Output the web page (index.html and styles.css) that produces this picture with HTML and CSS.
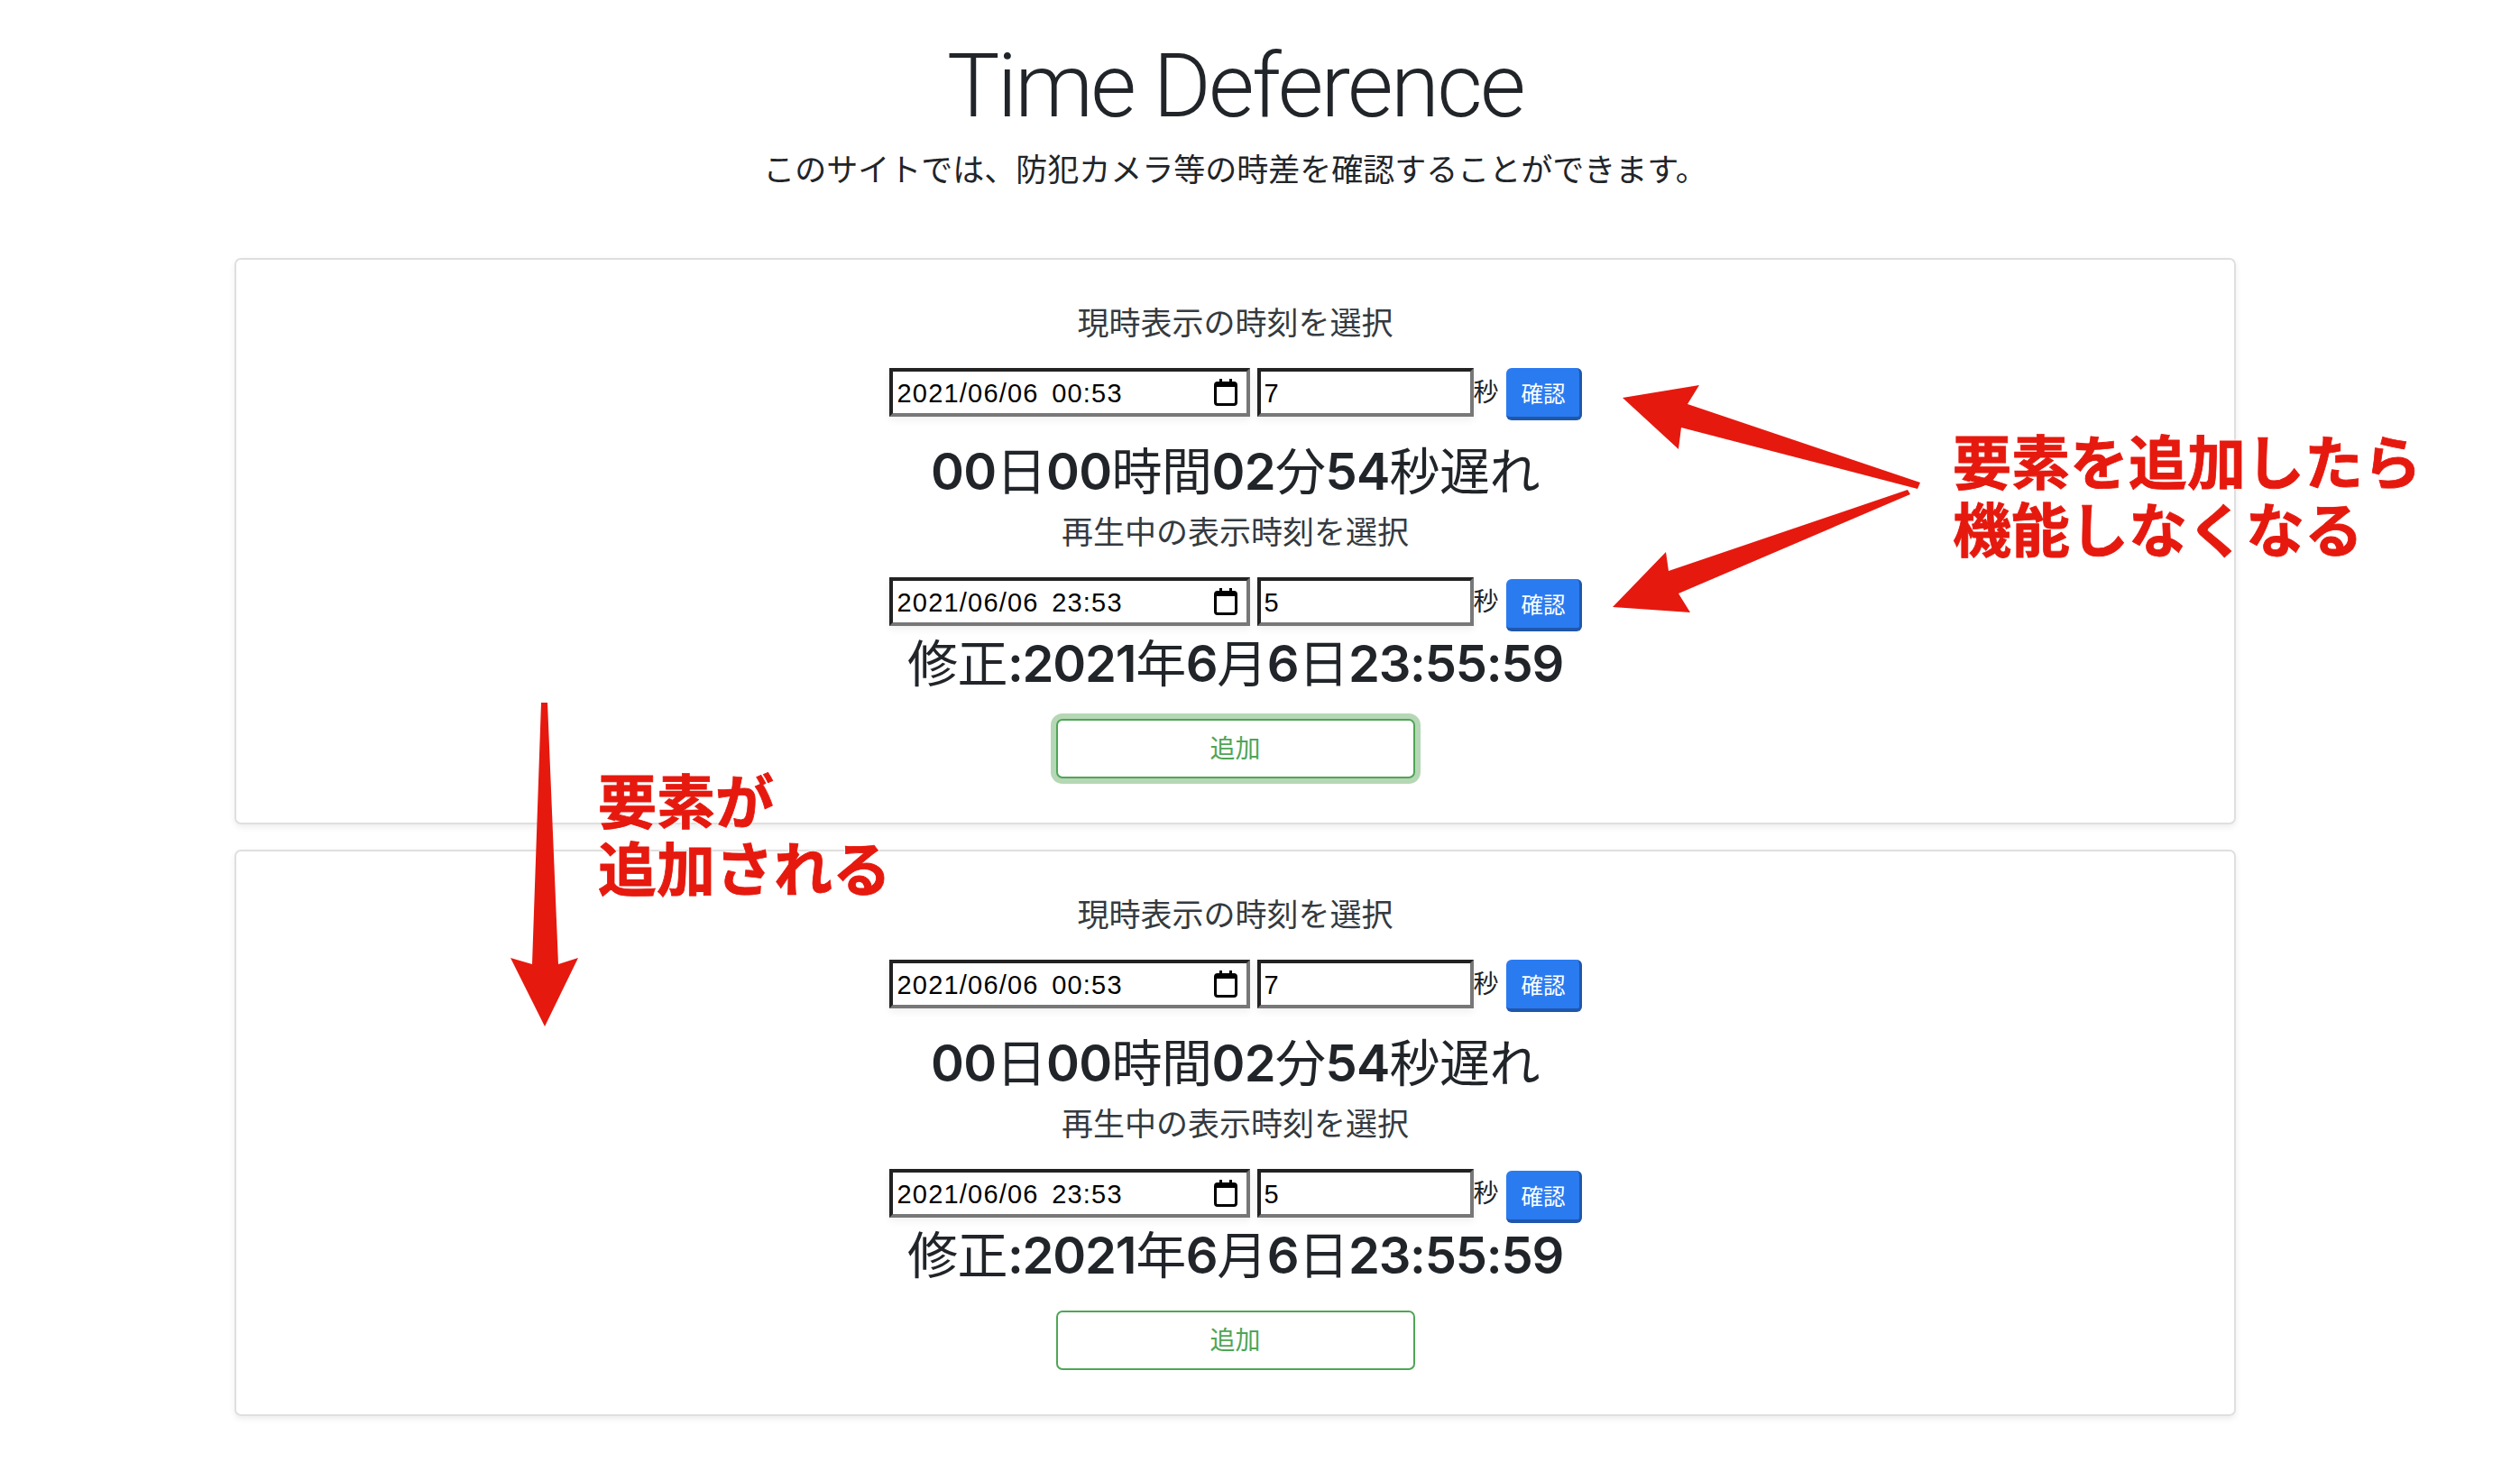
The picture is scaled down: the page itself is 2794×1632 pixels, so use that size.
FILE: index.html
```html
<!DOCTYPE html>
<html lang="ja">
<head>
    <meta charset="UTF-8">
    <meta name="viewport" content="width=device-width, initial-scale=1.0">
    <title>Time Deference</title>
    <link rel="stylesheet" href="styles.css">
</head>
<body>
    <main class="page">
        <header class="header">
            <h1 class="title">Time Deference</h1>
            <p class="lead">このサイトでは、防犯カメラ等の時差を確認することができます。</p>
        </header>

        <section class="card">
            <p class="label">現時表示の時刻を選択</p>
            <div class="row">
                <div class="field field-date">
                    <span class="value">2021/06/06  00:53</span>
                    <svg class="cal" viewBox="0 0 26 30"><path d="M6 0h3v3h8V0h3v3h2a4 4 0 0 1 4 4v19a4 4 0 0 1-4 4H4a4 4 0 0 1-4-4V7a4 4 0 0 1 4-4h2zM3 9v17a1 1 0 0 0 1 1h18a1 1 0 0 0 1-1V9z" fill-rule="evenodd"/></svg>
                </div>
                <div class="field field-num"><span class="value">7</span></div>
                <span class="unit">秒</span>
                <button class="btn-check">確認</button>
            </div>
            <h3 class="result result-delay"><b>00</b>日<b>00</b>時間<b>02</b>分<b>54</b>秒遅れ</h3>
            <p class="label label-second">再生中の表示時刻を選択</p>
            <div class="row row-second">
                <div class="field field-date">
                    <span class="value">2021/06/06  23:53</span>
                    <svg class="cal" viewBox="0 0 26 30"><path d="M6 0h3v3h8V0h3v3h2a4 4 0 0 1 4 4v19a4 4 0 0 1-4 4H4a4 4 0 0 1-4-4V7a4 4 0 0 1 4-4h2zM3 9v17a1 1 0 0 0 1 1h18a1 1 0 0 0 1-1V9z" fill-rule="evenodd"/></svg>
                </div>
                <div class="field field-num"><span class="value">5</span></div>
                <span class="unit">秒</span>
                <button class="btn-check">確認</button>
            </div>
            <h3 class="result result-fixed">修正<b>:2021</b>年<b>6</b>月<b>6</b>日<b>23:55:59</b></h3>
            <button class="btn-add btn-focus">追加</button>
        </section>

        <section class="card">
            <p class="label">現時表示の時刻を選択</p>
            <div class="row">
                <div class="field field-date">
                    <span class="value">2021/06/06  00:53</span>
                    <svg class="cal" viewBox="0 0 26 30"><path d="M6 0h3v3h8V0h3v3h2a4 4 0 0 1 4 4v19a4 4 0 0 1-4 4H4a4 4 0 0 1-4-4V7a4 4 0 0 1 4-4h2zM3 9v17a1 1 0 0 0 1 1h18a1 1 0 0 0 1-1V9z" fill-rule="evenodd"/></svg>
                </div>
                <div class="field field-num"><span class="value">7</span></div>
                <span class="unit">秒</span>
                <button class="btn-check">確認</button>
            </div>
            <h3 class="result result-delay"><b>00</b>日<b>00</b>時間<b>02</b>分<b>54</b>秒遅れ</h3>
            <p class="label label-second">再生中の表示時刻を選択</p>
            <div class="row row-second">
                <div class="field field-date">
                    <span class="value">2021/06/06  23:53</span>
                    <svg class="cal" viewBox="0 0 26 30"><path d="M6 0h3v3h8V0h3v3h2a4 4 0 0 1 4 4v19a4 4 0 0 1-4 4H4a4 4 0 0 1-4-4V7a4 4 0 0 1 4-4h2zM3 9v17a1 1 0 0 0 1 1h18a1 1 0 0 0 1-1V9z" fill-rule="evenodd"/></svg>
                </div>
                <div class="field field-num"><span class="value">5</span></div>
                <span class="unit">秒</span>
                <button class="btn-check">確認</button>
            </div>
            <h3 class="result result-fixed">修正<b>:2021</b>年<b>6</b>月<b>6</b>日<b>23:55:59</b></h3>
            <button class="btn-add">追加</button>
        </section>
    </main>

    <!-- red annotations drawn on top of the page -->
    <svg class="arrows" viewBox="0 0 2794 1632">
        <polygon points="1799,441 1884,427 1871,448 2129,535 2126,542 1864,474 1861,498"/>
        <polygon points="2115,543 2118,548 1861,658 1874,679 1788,673 1847,612 1850,633"/>
        <polygon points="600,779 607,779 619,1069 641,1062 604,1138 566,1062 590,1069"/>
    </svg>
    <p class="note note-right">要素を追加したら<br>機能しなくなる</p>
    <p class="note note-left">要素が<br>追加される</p>
</body>
</html>
```

FILE: styles.css
```css
* { box-sizing: border-box; }
body { margin: 0; background: #fff; color: #212529; font-family: Inter, "Noto Sans CJK JP", sans-serif; }
p, h1, h3 { margin: 0; }

.page { width: 2739px; padding-top: 37px; }

.header { text-align: center; height: 249px; }
.title { font-family: Roboto, "Noto Sans CJK JP", sans-serif; font-size: 98px; font-weight: 300; line-height: 118px; letter-spacing: -2.7px; }
.lead { font-family: "Noto Sans CJK JP", sans-serif; font-size: 35px; line-height: 52px; margin-top: 5px; }

.card { width: 2219px; height: 628px; margin: 0 auto 28px; padding-top: 42px; display: flex; flex-direction: column; align-items: center; border: 2px solid #dfdfdf; border-radius: 7px; box-shadow: 0 3px 7px rgba(0, 0, 0, .075); }

.label { font-family: "Noto Sans CJK JP", sans-serif; font-size: 35px; line-height: 52px; color: #343a40; }
.label-second { margin-top: 5px; }

.row { display: flex; align-items: flex-start; margin-top: 26px; height: 58px; }
.row-second { height: 62px; }
.row-second .btn-check { margin-top: 2px; }

.field { height: 54px; display: flex; align-items: center; background: #fff; border-style: solid; border-width: 4px; border-color: #222 #777 #777 #222; box-shadow: 0 4px 8px rgba(0, 0, 0, .06); }
.field-date { width: 400px; padding: 0 10px 0 5px; justify-content: space-between; margin-right: 8px; }
.field-num { width: 240px; padding-left: 4px; }
.value { padding-top: 2px; font-family: "Liberation Sans", sans-serif; font-size: 29px; letter-spacing: 1.2px; word-spacing: -2px; color: #000; white-space: pre; }
.cal { width: 26px; height: 30px; fill: #000; }

.unit { width: 36px; font-family: "Noto Sans CJK JP", sans-serif; font-size: 28px; line-height: 50px; color: #212529; }

.btn-check { width: 84px; height: 58px; padding: 0 0 0 2px; font-family: "Noto Sans CJK JP", sans-serif; font-size: 24.5px; color: #fff; background: #2b7bf0; border: none; border-right: 3px solid #1f57ab; border-bottom: 4px solid #1f57ab; border-radius: 6px; }

.result { height: 68px; font-size: 56px; font-weight: 400; line-height: 68px; letter-spacing: -.5px; white-space: nowrap; }
.result b { font-weight: 600; letter-spacing: -.7px; }
.result-delay { margin-top: 23px; }
.result-fixed b { letter-spacing: -1.2px; }

.btn-add { width: 398px; height: 66px; margin-top: 27px; padding: 0 0 4px; font-family: "Noto Sans CJK JP", sans-serif; font-size: 28px; color: #4fa556; background: #fff; border: 2px solid #4fa556; border-radius: 7px; }
.btn-focus { box-shadow: 0 0 0 6px #b5d7b5; }

.arrows { position: absolute; left: 0; top: 0; width: 2794px; height: 1632px; fill: #e6190f; }
.note { position: absolute; font-family: "Noto Sans CJK JP", sans-serif; font-size: 65px; font-weight: 700; line-height: 75px; color: #e6190f; white-space: nowrap; -webkit-text-stroke: .8px #e6190f; text-shadow: 0 0 3px #fff, 0 0 3px #fff, 0 0 3px #fff; }
.note-right { left: 2165px; top: 472px; }
.note-left { left: 663px; top: 848px; }
```
